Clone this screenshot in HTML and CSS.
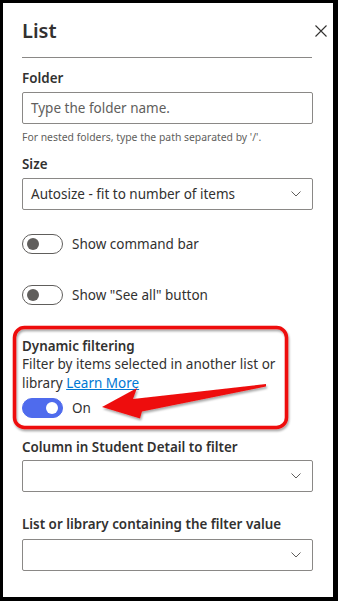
FILE: index.html
```html
<!DOCTYPE html>
<html lang="en">
<head>
<meta charset="utf-8">
<title>List</title>
<link rel="stylesheet" href="styles.css">
</head>
<body>
<div class="panel">
  <header class="head">
    <h1 class="title">List</h1>
    <button class="close" aria-label="Close">
      <svg width="12" height="12" viewBox="0 0 12 12"><path d="M0.5 0.5L11.5 11.5M11.5 0.5L0.5 11.5" stroke="#323130" stroke-width="1.1" fill="none"/></svg>
    </button>
  </header>
  <div class="divider"></div>

  <label class="label">Folder</label>
  <div class="field"><span class="placeholder">Type the folder name.</span></div>
  <div class="helper">For nested folders, type the path separated by '/'.</div>

  <label class="label">Size</label>
  <div class="field select">
    <span class="value">Autosize - fit to number of items</span>
    <svg class="chev" width="10" height="6" viewBox="0 0 10 6"><path d="M0.5 0.5L5 5L9.5 0.5" stroke="#605e5c" stroke-width="1" fill="none"/></svg>
  </div>

  <div class="toggle-row first">
    <span class="toggle"><span class="knob"></span></span>
    <span class="toggle-text">Show command bar</span>
  </div>
  <div class="toggle-row second">
    <span class="toggle"><span class="knob"></span></span>
    <span class="toggle-text">Show "See all" button</span>
  </div>

  <section class="dyn">
    <div class="dyn-title">Dynamic filtering</div>
    <div class="dyn-desc">Filter by items selected in another list or library <a class="link" href="#">Learn More</a></div>
    <div class="toggle-row on-row">
      <span class="toggle on"><span class="knob"></span></span>
      <span class="toggle-text">On</span>
    </div>
  </section>

  <label class="label col-label">Column in Student Detail to filter</label>
  <div class="field select">
    <span class="value"></span>
    <svg class="chev" width="10" height="6" viewBox="0 0 10 6"><path d="M0.5 0.5L5 5L9.5 0.5" stroke="#605e5c" stroke-width="1" fill="none"/></svg>
  </div>

  <label class="label list-label">List or library containing the filter value</label>
  <div class="field select">
    <span class="value"></span>
    <svg class="chev" width="10" height="6" viewBox="0 0 10 6"><path d="M0.5 0.5L5 5L9.5 0.5" stroke="#605e5c" stroke-width="1" fill="none"/></svg>
  </div>

  <svg class="annot" width="330" height="594" viewBox="0 0 330 594">
    <defs>
      <filter id="sh" x="-10%" y="-10%" width="130%" height="130%">
        <feDropShadow dx="1" dy="2" stdDeviation="1.2" flood-color="#000" flood-opacity="0.35"/>
      </filter>
    </defs>
    <rect x="11.5" y="324.5" width="272" height="100" rx="10" ry="10" fill="none" stroke="#ee1111" stroke-width="3.5" filter="url(#sh)"/>
    <polygon points="99,404 134,385 130,396 263,381 263,383.5 139,408.5 137,415.5" fill="#ee1111" filter="url(#sh)"/>
  </svg>
</div>
</body>
</html>
```

FILE: styles.css
```css
* { box-sizing: border-box; }
html, body { margin: 0; padding: 0; }
body {
  background: #000;
  width: 338px;
  height: 601px;
  overflow: hidden;
  font-family: "Noto Sans", "Open Sans", sans-serif;
  color: #323130;
}
.panel {
  position: relative;
  margin: 3px 0 0 3px;
  width: 330px;
  height: 594px;
  background: #fff;
  padding: 14px 20px 0 19px;
  display: flex;
  flex-direction: column;
}
.panel > * { flex-shrink: 0; }
.head {
  display: flex;
  align-items: center;
  justify-content: space-between;
  height: 28px;
}
.title {
  margin: 0;
  font-size: 20px;
  font-weight: 600;
  line-height: 28px;
}
.close {
  border: 0;
  background: none;
  padding: 0;
  margin-right: -14px;
  display: flex;
  width: 12px;
  height: 12px;
}
.divider {
  margin-top: 12px;
  margin-bottom: 5px;
  height: 1px;
  background: #8a8886;
  width: 290px;
}
.label {
  display: block;
  font-size: 13.4px;
  font-weight: 600;
  line-height: 20px;
  padding: 5px 0 4px;
}
.field {
  height: 32px;
  border: 1px solid #8a8886;
  border-radius: 2px;
  display: flex;
  align-items: center;
  padding: 0 8px;
  font-size: 13.5px;
}
.placeholder { color: #605e5c; }
.select { justify-content: space-between; }
.select .value { color: #323130; }
.chev { margin-right: 3px; }
.helper {
  font-size: 10.4px;
  line-height: 16px;
  color: #605e5c;
  margin-top: 5px;
  margin-bottom: 4px;
}
.toggle-row {
  display: flex;
  align-items: center;
  gap: 9px;
  font-size: 13.5px;
}
.toggle-row.first { margin-top: 24px; }
.toggle-row.second { margin-top: 31px; }
.toggle {
  width: 41px;
  height: 20px;
  border: 1px solid #605e5c;
  border-radius: 10px;
  display: flex;
  align-items: center;
  padding: 0 4px;
}
.knob {
  width: 12px;
  height: 12px;
  border-radius: 50%;
  background: #605e5c;
}
.toggle.on {
  background: #4f6bed;
  border-color: #4f6bed;
  justify-content: flex-end;
}
.toggle.on .knob { background: #fff; }
.toggle-text { line-height: 20px; }
.dyn { margin-top: 32px; }
.dyn-title {
  font-size: 13.4px;
  font-weight: 600;
  line-height: 18px;
}
.dyn-desc {
  font-size: 13.5px;
  line-height: 19px;
}
.link { color: #0078d4; text-decoration: underline; }
.on-row { margin-top: 5px; }
.col-label { padding: 14px 0 3px; margin-top: 5px; }
.list-label { padding: 22px 0 5px; }
.annot {
  position: absolute;
  left: 0;
  top: 0;
  pointer-events: none;
}
```
